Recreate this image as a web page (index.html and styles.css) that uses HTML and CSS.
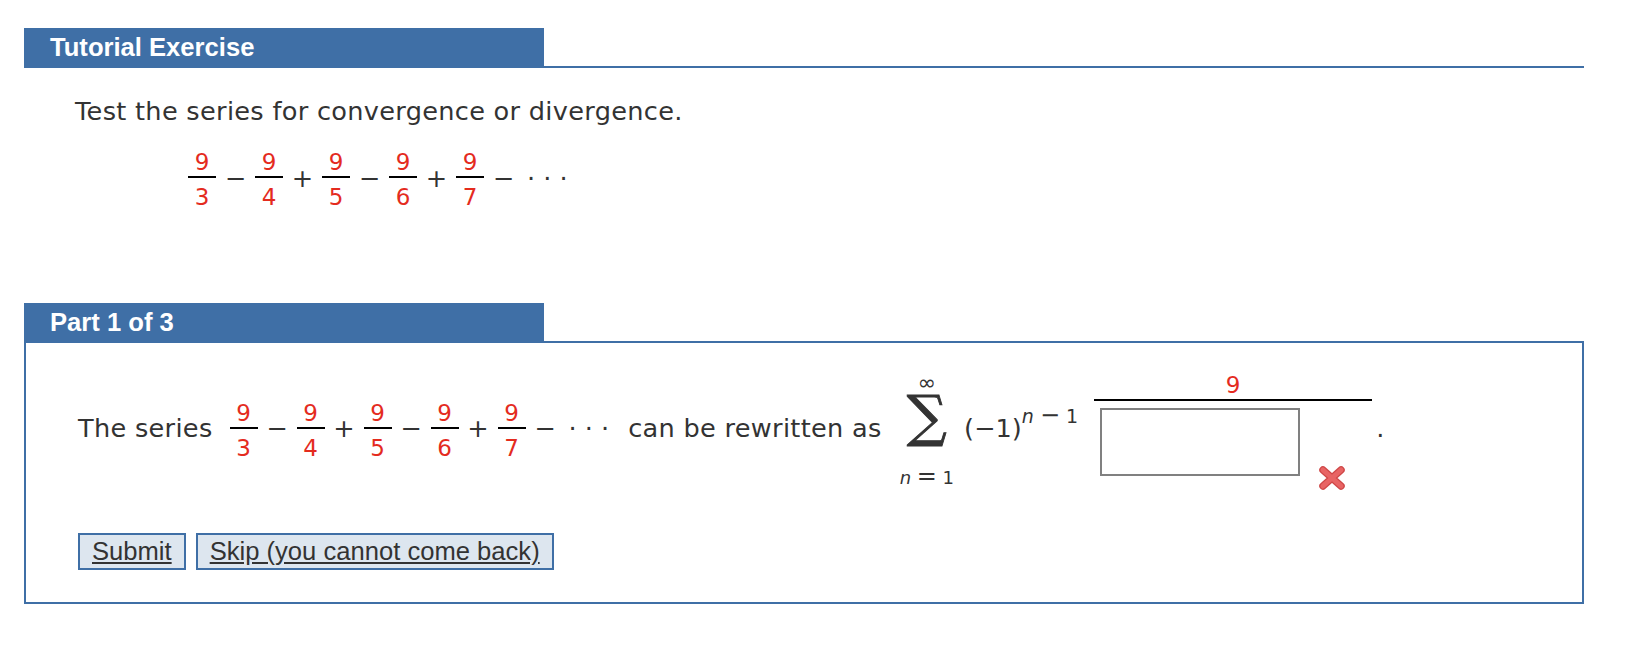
FILE: index.html
```html
<!DOCTYPE html>
<html lang="en">
<head>
<meta charset="utf-8">
<title>Tutorial Exercise</title>
<link rel="stylesheet" href="styles.css">
</head>
<body>
<div class="page">
  <section class="tutorial">
    <div class="tab-row"><div class="tab">Tutorial Exercise</div></div>
    <div class="tutorial-body">
      <p class="prompt">Test the series for convergence or divergence.</p>
      <div class="series series-intro">
        <span class="frac"><span class="num">9</span><span class="bar"></span><span class="den">3</span></span>
        <span class="op">−</span>
        <span class="frac"><span class="num">9</span><span class="bar"></span><span class="den">4</span></span>
        <span class="op">+</span>
        <span class="frac"><span class="num">9</span><span class="bar"></span><span class="den">5</span></span>
        <span class="op">−</span>
        <span class="frac"><span class="num">9</span><span class="bar"></span><span class="den">6</span></span>
        <span class="op">+</span>
        <span class="frac"><span class="num">9</span><span class="bar"></span><span class="den">7</span></span>
        <span class="op">−</span>
        <span class="dots">· · ·</span>
      </div>
    </div>
  </section>

  <section class="part">
    <div class="tab-row"><div class="tab">Part 1 of 3</div></div>
    <div class="part-box">
      <div class="math-row">
        <span class="text">The series</span>
        <div class="series series-inline">
          <span class="frac"><span class="num">9</span><span class="bar"></span><span class="den">3</span></span>
          <span class="op">−</span>
          <span class="frac"><span class="num">9</span><span class="bar"></span><span class="den">4</span></span>
          <span class="op">+</span>
          <span class="frac"><span class="num">9</span><span class="bar"></span><span class="den">5</span></span>
          <span class="op">−</span>
          <span class="frac"><span class="num">9</span><span class="bar"></span><span class="den">6</span></span>
          <span class="op">+</span>
          <span class="frac"><span class="num">9</span><span class="bar"></span><span class="den">7</span></span>
          <span class="op">−</span>
          <span class="dots">· · ·</span>
        </div>
        <span class="text rewrite">can be rewritten as</span>
        <span class="sum">
          <span class="sum-upper">∞</span>
          <span class="sum-sign">∑</span>
          <span class="sum-lower"><i>n</i> <span class="script-op">=</span> 1</span>
        </span>
        <span class="text term">(−1)<sup class="power"><i>n</i> <span class="script-op">−</span> 1</sup></span>
        <span class="big-frac">
          <span class="num">9</span>
          <span class="bar"></span>
          <span class="den">
            <input class="answer" type="text" aria-label="denominator">
            <svg class="wrong" viewBox="0 0 28 24" aria-hidden="true">
              <path d="M5 4 L23 20 M23 4 L5 20" stroke="#cf4747" stroke-width="7.5" stroke-linecap="round" fill="none"/>
              <path d="M5 4 L23 20 M23 4 L5 20" stroke="#e86464" stroke-width="5" stroke-linecap="round" fill="none"/>
            </svg>
          </span>
        </span>
        <span class="text period">.</span>
      </div>
      <div class="buttons">
        <button class="btn" type="button">Submit</button>
        <button class="btn" type="button">Skip (you cannot come back)</button>
      </div>
    </div>
  </section>
</div>
</body>
</html>
```

FILE: styles.css
```css
body {
  margin: 0;
  background: #ffffff;
  color: #333333;
  font-family: "DejaVu Sans", Verdana, sans-serif;
}

.page {
  padding: 28px 42px 0 24px;
}

.tab-row {
  display: flex;
}

.tutorial .tab-row {
  border-bottom: 2px solid #3f6fa6;
}

.tab {
  width: 520px;
  height: 38px;
  box-sizing: border-box;
  padding-left: 26px;
  background: #3f6fa6;
  color: #ffffff;
  font: bold 25.6px/38px "Liberation Sans", Arial, sans-serif;
}

.tutorial-body {
  padding-left: 51px;
}

.prompt {
  margin: 28px 0 0;
  font-size: 25.6px;
  line-height: normal;
  letter-spacing: 0.3px;
}

.series {
  display: flex;
  align-items: center;
}

.series-intro {
  margin: 20px 0 0 113px;
}

.frac {
  display: flex;
  flex-direction: column;
  align-items: center;
  width: 28px;
  color: #e42b1e;
  font-size: 23px;
  line-height: 24px;
}

.frac .num {
  padding: 4px 0 2px;
}

.frac .bar {
  align-self: stretch;
  height: 2px;
  background: #000000;
}

.frac .den {
  padding-top: 7px;
}

.op {
  width: 39px;
  text-align: center;
  font-size: 25.6px;
  line-height: 30px;
}

.dots {
  margin-left: 4px;
  font-size: 25.6px;
  line-height: 30px;
  white-space: nowrap;
}

.part {
  margin-top: 94px;
}

.part-box {
  border: 2px solid #3f6fa6;
  padding: 23px 0 32px 52px;
}

.math-row {
  display: flex;
  align-items: center;
  font-size: 25.6px;
}

.text {
  line-height: 30px;
  white-space: nowrap;
  letter-spacing: 0.3px;
}

.series-inline {
  margin-left: 17px;
}

.rewrite {
  margin-left: 19px;
}

.sum {
  display: flex;
  flex-direction: column;
  align-items: center;
  margin: 8px 0 0 18px;
}

.sum-upper {
  font-size: 22px;
  line-height: 14px;
}

.sum-lower {
  font-size: 18px;
  line-height: 20px;
  white-space: nowrap;
}

.sum-sign {
  font-family: "DejaVu Serif", "Liberation Serif", serif;
  font-size: 56px;
  line-height: 52px;
  margin-bottom: 24px;
  -webkit-text-stroke: 0.9px currentColor;
}

.script-op {
  font-size: 24px;
}

.term {
  margin-left: 10px;
  letter-spacing: 0;
}

.power {
  font-size: 19px;
  line-height: 0;
  vertical-align: 14px;
}

.big-frac {
  display: flex;
  flex-direction: column;
  align-items: center;
  margin: 7px 0 0 16px;
}

.big-frac .num {
  color: #e42b1e;
  font-size: 23px;
  line-height: 24px;
  padding-bottom: 2px;
}

.big-frac .bar {
  width: 278px;
  height: 2px;
  background: #000000;
}

.big-frac .den {
  align-self: stretch;
  display: flex;
  align-items: flex-end;
  padding-top: 7px;
}

.answer {
  width: 200px;
  height: 68px;
  box-sizing: border-box;
  margin: 0 0 14px 6px;
  border: 2px solid #808080;
  background: #ffffff;
  padding: 0;
}

.wrong {
  width: 28px;
  height: 24px;
  margin-left: 18px;
}

.period {
  margin-left: 4px;
}

.buttons {
  display: flex;
  gap: 10px;
  margin-top: 43px;
}

.btn {
  margin: 0;
  height: 37px;
  padding: 0 12px;
  border: 2px solid #3f6fa6;
  border-radius: 0;
  background: #dde6ef;
  color: #333333;
  font: 25.6px/33px "Liberation Sans", Arial, sans-serif;
  text-decoration: underline;
}
```
